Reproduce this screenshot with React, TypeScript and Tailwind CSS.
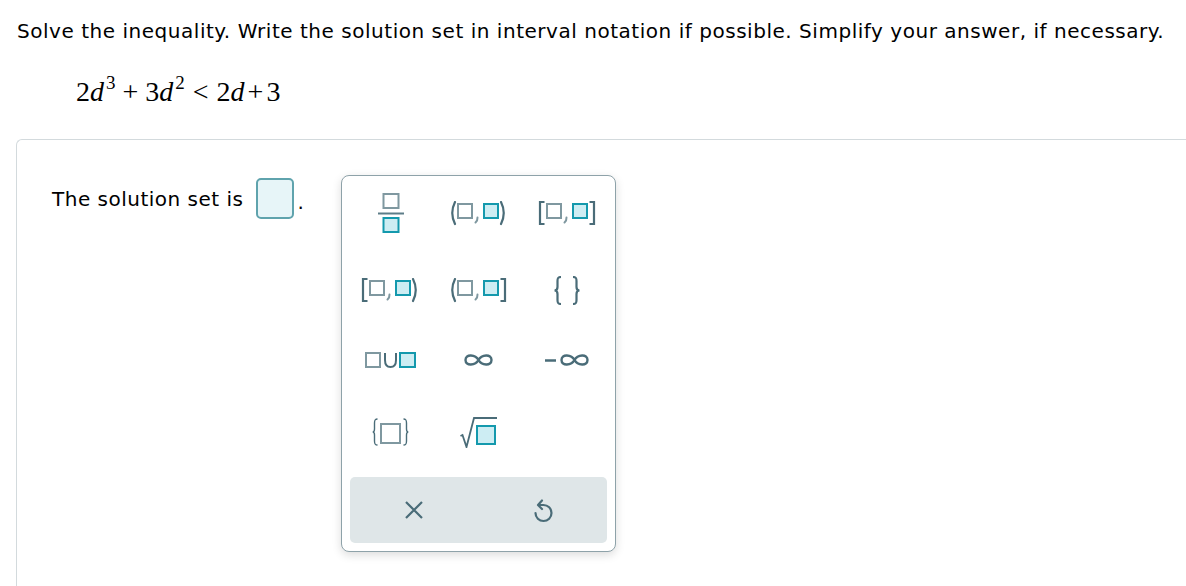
import React from 'react';

const GRAY = '#7f98a0';
const TEAL = '#1499ad';
const TEAL_FILL = '#cdedf3';
const DARK = '#4a6c78';

const GrayBox = ({ x, y, w, h }: { x: number; y: number; w: number; h: number }) => (
  <rect x={x} y={y} width={w} height={h} fill="#fff" stroke={GRAY} strokeWidth="2" />
);

const TealBox = ({ x, y, w, h }: { x: number; y: number; w: number; h: number }) => (
  <rect x={x} y={y} width={w} height={h} fill={TEAL_FILL} stroke={TEAL} strokeWidth="2" />
);

const FractionIcon = () => (
  <svg width="26" height="40" viewBox="0 0 26 40">
    <GrayBox x={5.5} y={1} w={15} h={14} />
    <line x1="0" y1="20.5" x2="26" y2="20.5" stroke="#5d7d88" strokeWidth="2" />
    <TealBox x={5.5} y={25} w={15} h={14} />
  </svg>
);

const IntervalIcon = ({ left, right }: { left: '(' | '['; right: ')' | ']' }) => (
  <svg width="58" height="25" viewBox="0 0 58 25" fill="none">
    {left === '(' ? (
      <path d="M6 1 Q0.5 12 6 23" stroke={DARK} strokeWidth="2.2" strokeLinecap="round" />
    ) : (
      <path d="M6.5 1 H2 V23 H6.5" stroke={DARK} strokeWidth="2.2" />
    )}
    <GrayBox x={9} y={3} w={14} h={14} />
    <path d="M28.5 16.5 Q28.7 19.5 26.5 21.5" stroke={GRAY} strokeWidth="2" strokeLinecap="round" />
    <TealBox x={35} y={3} w={14} h={14} />
    {right === ')' ? (
      <path d="M52 1 Q57.5 12 52 23" stroke={DARK} strokeWidth="2.2" strokeLinecap="round" />
    ) : (
      <path d="M51.5 1 H56 V23 H51.5" stroke={DARK} strokeWidth="2.2" />
    )}
  </svg>
);

// curly braces pair
const BracesIcon = () => (
  <svg width="28" height="29" viewBox="0 0 28 29" fill="none">
    <path
      d="M8 1 C5 1 4.5 2 4.5 5 V11 C4.5 13.5 3.5 14.5 1.5 14.5 C3.5 14.5 4.5 15.5 4.5 18 V24 C4.5 27 5 28 8 28"
      stroke={DARK}
      strokeWidth="2.2"
    />
    <path
      d="M20 1 C23 1 23.5 2 23.5 5 V11 C23.5 13.5 24.5 14.5 26.5 14.5 C24.5 14.5 23.5 15.5 23.5 18 V24 C23.5 27 23 28 20 28"
      stroke={DARK}
      strokeWidth="2.2"
    />
  </svg>
);

const UnionIcon = () => (
  <svg width="51" height="16" viewBox="0 0 51 16" fill="none">
    <GrayBox x={1} y={1} w={14} h={14} />
    <path d="M20 1 V8 Q20 15 25.5 15 Q31 15 31 8 V1" stroke={DARK} strokeWidth="2" />
    <TealBox x={35} y={1} w={15} h={14} />
  </svg>
);

const INF = 'M14.5 8 C11.5 2.5 1.5 1.5 1.5 8 C1.5 14.5 11.5 13.5 14.5 8 C17.5 2.5 27.5 1.5 27.5 8 C27.5 14.5 17.5 13.5 14.5 8 Z';

const Infinity = ({ minus }: { minus?: boolean }) => (
  <svg width={minus ? 44 : 29} height="16" viewBox={minus ? '0 0 44 16' : '0 0 29 16'} fill="none">
    {minus && <line x1="0" y1="8.5" x2="11" y2="8.5" stroke={DARK} strokeWidth="2.5" />}
    <path d={INF} transform={minus ? 'translate(15 0)' : undefined} stroke={DARK} strokeWidth="2.4" />
  </svg>
);

const SetIcon = () => (
  <svg width="37" height="28" viewBox="0 0 37 28" fill="none">
    <path
      d="M5.5 1 C3 1 2.5 2 2.5 5 V11 C2.5 13 2 14 0.7 14 C2 14 2.5 15 2.5 17 V23 C2.5 26 3 27 5.5 27"
      stroke={DARK}
      strokeWidth="1.4"
    />
    <GrayBox x={9} y={6} w={19} h={19} />
    <path
      d="M31.5 1 C34 1 34.5 2 34.5 5 V11 C34.5 13 35 14 36.3 14 C35 14 34.5 15 34.5 17 V23 C34.5 26 34 27 31.5 27"
      stroke={DARK}
      strokeWidth="1.4"
    />
  </svg>
);

const SqrtIcon = () => (
  <svg width="37" height="31" viewBox="0 0 37 31" fill="none">
    <path d="M0.5 19 L2.5 18 L6.5 30 L14 1 H37" stroke={DARK} strokeWidth="1.8" strokeLinejoin="miter" />
    <TealBox x={17} y={9} w={18} h={18} />
  </svg>
);

const ClearIcon = () => (
  <svg width="18" height="18" viewBox="0 0 18 18" fill="none">
    <path d="M1 1 L17 17 M17 1 L1 17" stroke={DARK} strokeWidth="2.2" />
  </svg>
);

const UndoIcon = () => (
  <svg width="22" height="26" viewBox="0 0 22 26" fill="none">
    <path d="M3.5 16 A8 8 0 1 0 11.5 8 H7" stroke={DARK} strokeWidth="2.2" strokeLinecap="round" />
    <path d="M10 3.5 L6 8 L10 12" stroke={DARK} strokeWidth="2.2" strokeLinecap="round" strokeLinejoin="round" />
  </svg>
);

const Palette = () => (
  <div className="absolute left-[324px] top-[35px] w-[275px] h-[377px] bg-white border border-[#8ea2a9] rounded-[8px] shadow-[0_3px_10px_rgba(0,0,0,0.14)] flex flex-col">
    <div className="grid grid-cols-3 grid-rows-[74px_80px_60px_84px] px-[4px]">
      <div className="flex items-center justify-center pl-[2px]"><FractionIcon /></div>
      <div className="flex items-center justify-center"><IntervalIcon left="(" right=")" /></div>
      <div className="flex items-center justify-center"><IntervalIcon left="[" right="]" /></div>
      <div className="flex items-center justify-center"><IntervalIcon left="[" right=")" /></div>
      <div className="flex items-center justify-center"><IntervalIcon left="(" right="]" /></div>
      <div className="flex items-center justify-center"><BracesIcon /></div>
      <div className="flex items-center justify-center"><UnionIcon /></div>
      <div className="flex items-center justify-center"><Infinity /></div>
      <div className="flex items-center justify-center"><Infinity minus /></div>
      <div className="flex items-center justify-center"><SetIcon /></div>
      <div className="flex items-center justify-center"><SqrtIcon /></div>
      <div />
    </div>
    <div className="mx-[8px] mt-[3px] h-[66px] bg-[#dfe6e8] rounded-[5px] grid grid-cols-2">
      <div className="flex items-center justify-center"><ClearIcon /></div>
      <div className="flex items-center justify-center"><UndoIcon /></div>
    </div>
  </div>
);

export default function App() {
  return (
    <div className="w-[1186px] h-[586px] overflow-hidden bg-white text-black font-['DejaVu_Sans',sans-serif]">
      <p className="pt-[19px] pl-[17px] text-[20px] leading-[24px] tracking-[0.53px] whitespace-nowrap">
        Solve the inequality. Write the solution set in interval notation if possible. Simplify your answer, if necessary.
      </p>

      <div className="mt-[34px] pl-[76px] h-[30px] leading-[30px] text-[28px] font-['Liberation_Serif',serif] whitespace-nowrap">
        2<i>d</i><sup className="ml-[2px] text-[19px] top-[-12px]">3</sup>
        <span className="mx-[7px]">+</span>
        3<i>d</i><sup className="ml-[2px] text-[19px] top-[-12px]">2</sup>
        <span className="mx-[8px]">&lt;</span>
        2<i>d</i><span className="mx-[3px]">+</span>3
      </div>

      <div className="relative mt-[32px] ml-[16px] w-[1200px] h-[500px] border-l border-t border-[#d3dadd] rounded-tl-[6px]">
        <div className="flex items-center pt-[38px] pl-[35px] text-[20px]">
          <span className="tracking-[0.5px]">The solution set is</span>
          <div className="ml-[12px] w-[38px] h-[41px] bg-[#e7f5f8] border-2 border-[#5fa3ad] rounded-[5px]" />
          <span className="ml-[4px] mt-[6px]">.</span>
        </div>
        <Palette />
      </div>
    </div>
  );
}
